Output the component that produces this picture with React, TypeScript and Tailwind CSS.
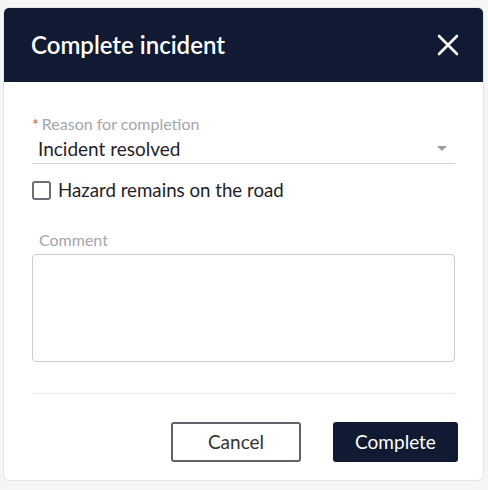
export default function App() {
  return (
    <div className="min-h-[490px] w-[488px] bg-[#f4f5f7] pt-[7px] pl-[3px] pr-[4px] font-['Lato','Noto_Sans',sans-serif]">
      <div className="h-[474px] rounded-[6px] bg-white border border-[#e3e5e8] overflow-hidden flex flex-col">
        <div className="h-[74px] shrink-0 bg-[#101a33] flex items-center justify-between pl-[27px] pr-[24px]">
          <h1 className="text-[24px] font-semibold text-white leading-none">Complete incident</h1>
          <svg width="22" height="22" viewBox="0 0 22 22" className="text-white">
            <path d="M2 2 L20 20 M20 2 L2 20" stroke="currentColor" strokeWidth="2.6" strokeLinecap="round" />
          </svg>
        </div>
        <div className="flex-1 flex flex-col px-[28px] pt-[32px]">
          <div className="text-[16px] leading-[20px] text-[#a3a6ab]">
            <span className="text-[#e5484d] mr-[3px]">*</span>Reason for completion
          </div>
          <div className="flex items-center justify-between border-b border-[#cfd2d6] h-[30px] pl-[6px] pr-[8px]">
            <span className="text-[19px] text-[#1f2328] leading-none">Incident resolved</span>
            <svg width="10" height="6" viewBox="0 0 10 6">
              <path d="M0 0 L10 0 L5 5 Z" fill="#9a9ea4" />
            </svg>
          </div>
          <label className="flex items-center gap-[7px] mt-[15px]">
            <span className="w-[19px] h-[19px] rounded-[3px] border-2 border-[#6b6f75] bg-white" />
            <span className="text-[18.7px] text-[#1f2328] leading-[22px]">Hazard remains on the road</span>
          </label>
          <div className="text-[16px] leading-[20px] text-[#a3a6ab] mt-[29px] pl-[7px]">Comment</div>
          <div className="mt-[4px] h-[108px] rounded-[4px] border border-[#c9ccd0]" />
          <div className="mt-[31px] border-t border-[#e6e8eb]" />
          <div className="flex justify-end gap-[32px] mt-[28px] -mr-[3px]">
            <button className="w-[130px] h-[40px] rounded-[3px] border-2 border-[#5f6368] bg-white text-[19px] text-[#333]">Cancel</button>
            <button className="w-[125px] h-[40px] rounded-[3px] bg-[#101a33] text-[19px] text-white">Complete</button>
          </div>
        </div>
      </div>
    </div>
  )
}
